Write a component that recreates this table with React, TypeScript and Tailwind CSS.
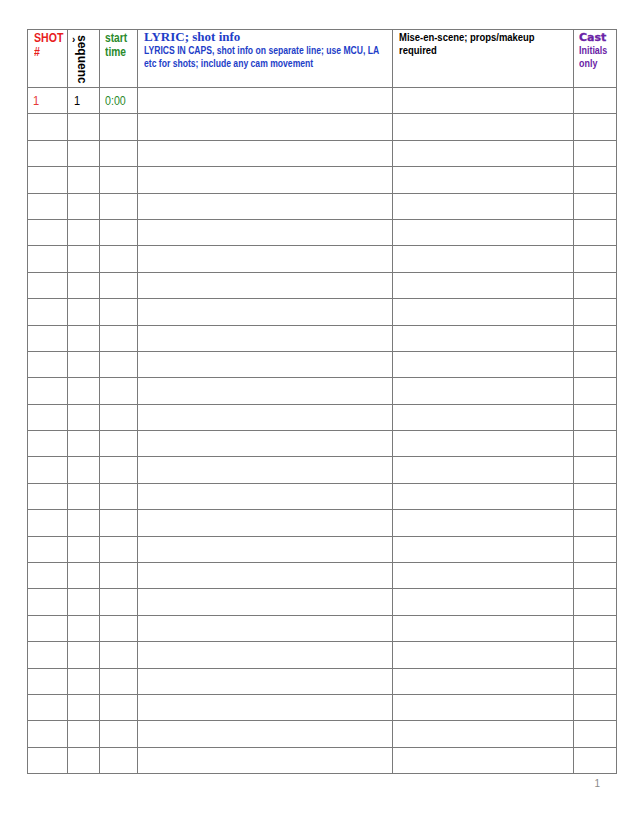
const ROWS = 26

export default function App() {
  return (
    <div className="min-h-[826px] w-[638px] bg-white pl-[27px] pt-[29px] font-['Liberation_Sans',Arial,sans-serif]">
      <table className="w-[589px] table-fixed border-collapse">
        <colgroup>
          <col className="w-[40px]" />
          <col className="w-[32px]" />
          <col className="w-[38px]" />
          <col className="w-[255px]" />
          <col className="w-[181px]" />
          <col className="w-[43px]" />
        </colgroup>
        <thead>
          <tr className="h-[58px]">
            {/* Arial Narrow isn't available, so the header copy is squeezed with scale-x */}
            <th className="border border-[#7a7a7a] pl-[6px] pt-[1px] text-left align-top font-bold text-[#e8201c]">
              <div className="w-[40px] origin-top-left scale-x-[0.88] text-[12px] leading-[14px]">
                SHOT<br />#
              </div>
            </th>
            <th className="border border-[#7a7a7a] p-0 align-top">
              <div className="flex items-start pl-[4px] pt-[5px]">
                <span className="text-[10px] font-bold leading-[10px] text-black">›</span>
                <span className="ml-[1px] text-[12px] font-bold leading-[12px] text-black [writing-mode:vertical-rl]">sequenc</span>
              </div>
            </th>
            <th className="border border-[#7a7a7a] pl-[5px] pt-[1px] text-left align-top font-bold text-[#2a8a2a]">
              <div className="w-[36px] origin-top-left scale-x-[0.85] text-[12px] leading-[14px]">
                start<br />time
              </div>
            </th>
            <th className="border border-[#7a7a7a] pl-[6px] pt-[1px] text-left align-top font-bold text-[#1e3ec8]">
              <div className="font-['Liberation_Serif','Times_New_Roman',serif] text-[13px] leading-[11px]">LYRIC; shot info</div>
              <div className="mt-[3px] w-[278px] origin-top-left scale-x-[0.86] text-[10px] leading-[12.5px]">
                LYRICS IN CAPS, shot info on separate line; use MCU, LA etc for shots; include any cam movement
              </div>
            </th>
            <th className="border border-[#7a7a7a] pl-[6px] pt-[1px] text-left align-top font-bold text-black">
              <div className="w-[196px] origin-top-left scale-x-[0.86] text-[11px] leading-[12.7px]">
                Mise-en-scene; props/makeup required
              </div>
            </th>
            <th className="border border-[#7a7a7a] pl-[5px] pt-[2px] text-left align-top font-bold text-[#6a22a6]">
              <div className="font-['DejaVu_Sans',sans-serif] text-[11px] leading-[12px] [-webkit-text-stroke:0.3px_#6a22a6]">Cast</div>
              <div className="w-[40px] origin-top-left scale-x-[0.85] text-[10.5px] leading-[12.7px]">
                Initials<br />only
              </div>
            </th>
          </tr>
        </thead>
        <tbody>
          {Array.from({ length: ROWS }).map((_, i) => (
            <tr key={i} className="h-[26.4px]">
              <td className="border border-[#7a7a7a] pl-[5px] text-[#e53935]">
                <div className="origin-left scale-x-[0.85] text-[13px] leading-none">{i === 0 ? '1' : ''}</div>
              </td>
              <td className="border border-[#7a7a7a] pl-[6px] text-black">
                <div className="origin-left scale-x-[0.85] text-[13px] leading-none">{i === 0 ? '1' : ''}</div>
              </td>
              <td className="border border-[#7a7a7a] pl-[5px] text-[#2a8a2a]">
                <div className="origin-left scale-x-[0.82] text-[13px] leading-none">{i === 0 ? '0:00' : ''}</div>
              </td>
              <td className="border border-[#7a7a7a]" />
              <td className="border border-[#7a7a7a]" />
              <td className="border border-[#7a7a7a]" />
            </tr>
          ))}
        </tbody>
      </table>
      <div className="w-[589px] pt-[4px] pr-[16px] text-right text-[10px] leading-[12px] text-[#8a8a8a]">1</div>
    </div>
  )
}
